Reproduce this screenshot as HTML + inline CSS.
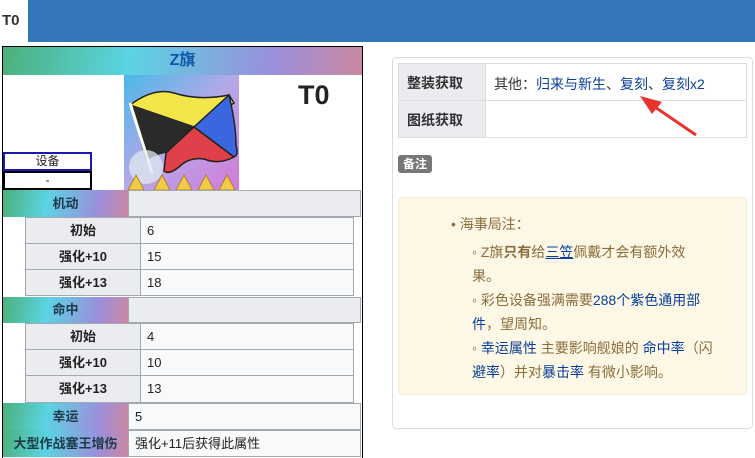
<!DOCTYPE html>
<html><head><meta charset="utf-8"><style>
*{margin:0;padding:0;box-sizing:border-box}
body{width:755px;height:455px;overflow:hidden;background:#fff;font-family:"Liberation Sans","Noto Sans CJK SC",sans-serif;font-size:13px;color:#222;position:relative}
.a{position:absolute}
.g{background:linear-gradient(100deg,#4bb07a 0%,#5bd4e2 35%,#9a8fdc 75%,#cc88a0 100%)}
.lab{position:absolute;background:#eaecf0;border:1px solid #a2a9b1;font-weight:bold;text-align:center;color:#222}
.val{position:absolute;background:#f8f9fa;border:1px solid #a2a9b1;padding-left:6px;color:#222}
.hd{position:absolute;font-weight:bold;text-align:center;color:#1c3a48}
a{color:#0b3e9c;text-decoration:none}
.y{color:#8a6d3b}
</style></head><body>
<div class="a" style="left:0;top:0;width:28px;height:42px;font-weight:bold;font-size:15px;line-height:42px;padding-left:2px;color:#333">T0</div>
<div class="a" style="left:28px;top:0;width:727px;height:42px;background:#3377b8"></div>

<div class="a" style="left:2px;top:46px;width:361px;height:412px;border:1px solid #000;border-bottom:none"></div>
<div class="a g" style="left:3px;top:47px;width:359px;height:28px;text-align:center;line-height:28px;font-weight:bold;font-size:16px;color:#0d56a8">Z旗</div>
<svg class="a" style="left:124px;top:75px" width="115" height="115" viewBox="0 0 115 115">
<defs><linearGradient id="bg" x1="0" y1="0" x2="1" y2="1"><stop offset="0" stop-color="#4ab8e8"/><stop offset=".5" stop-color="#b6a8e8"/><stop offset="1" stop-color="#d27ad8"/></linearGradient></defs>
<rect width="115" height="115" fill="url(#bg)"/>
<path d="M6,30 Q30,12 50,18 Q75,26 105,20 L110,28 L70,52 Z" fill="#f2e64a" stroke="#222" stroke-width="1.5"/>
<path d="M6,30 L70,52 L42,78 Q30,80 22,86 Z" fill="#2a2a2a"/>
<path d="M105,20 Q112,50 112,70 Q115,80 110,82 L70,52 Z" fill="#3a66e0" stroke="#222" stroke-width="1.5"/>
<path d="M70,52 L110,82 Q95,90 80,84 Q65,82 55,92 Q45,100 40,96 L42,78 Z" fill="#e0404a" stroke="#222" stroke-width="1.5"/>
<line x1="6" y1="28" x2="28" y2="98" stroke="#fff" stroke-width="3"/>
<circle cx="22" cy="92" r="17" fill="#dfe9f0" opacity=".75"/>
<g fill="#f3c94a" stroke="#a67b1a" stroke-width=".8">
<path d="M4,115 L12,100 L20,115Z"/><path d="M30,115 L38,100 L46,115Z"/><path d="M52,115 L60,100 L68,115Z"/><path d="M74,115 L82,100 L90,115Z"/><path d="M95,115 L103,100 L111,115Z"/></g>
</svg>
<div class="a" style="left:298px;top:80px;font-size:27px;font-weight:bold;color:#222">T0</div>
<div class="a" style="left:3px;top:152px;width:89px;height:19px;border:2px solid #1a1ab0;text-align:center;font-size:12px;line-height:15px">设备</div>
<div class="a" style="left:3px;top:171px;width:89px;height:19px;border:2px solid #000;text-align:center;font-size:12px;line-height:15px">-</div>

<div class="a g hd" style="left:3px;top:190px;width:125px;height:27px;line-height:27px">机动</div>
<div class="a" style="left:128px;top:190px;width:233px;height:27px;background:#eaecf0;border:1px solid #a2a9b1"></div>
<div class="lab" style="left:25px;top:217px;width:116px;height:27px;line-height:25px">初始</div><div class="val" style="left:140px;top:217px;width:214px;height:27px;line-height:25px">6</div>
<div class="lab" style="left:25px;top:243px;width:116px;height:27px;line-height:25px">强化+10</div><div class="val" style="left:140px;top:243px;width:214px;height:27px;line-height:25px">15</div>
<div class="lab" style="left:25px;top:269px;width:116px;height:27px;line-height:25px">强化+13</div><div class="val" style="left:140px;top:269px;width:214px;height:27px;line-height:25px">18</div>
<div class="a g hd" style="left:3px;top:297px;width:125px;height:26px;line-height:26px">命中</div>
<div class="a" style="left:128px;top:297px;width:233px;height:26px;background:#eaecf0;border:1px solid #a2a9b1"></div>
<div class="lab" style="left:25px;top:323px;width:116px;height:27px;line-height:25px">初始</div><div class="val" style="left:140px;top:323px;width:214px;height:27px;line-height:25px">4</div>
<div class="lab" style="left:25px;top:349px;width:116px;height:27px;line-height:25px">强化+10</div><div class="val" style="left:140px;top:349px;width:214px;height:27px;line-height:25px">10</div>
<div class="lab" style="left:25px;top:375px;width:116px;height:28px;line-height:26px">强化+13</div><div class="val" style="left:140px;top:375px;width:214px;height:28px;line-height:26px">13</div>
<div class="a g hd" style="left:3px;top:403px;width:125px;height:27px;line-height:27px">幸运</div>
<div class="val" style="left:128px;top:403px;width:233px;height:27px;line-height:25px">5</div>
<div class="a g hd" style="left:3px;top:430px;width:125px;height:27px;line-height:27px;font-size:13px">大型作战塞王增伤</div>
<div class="val" style="left:128px;top:430px;width:233px;height:27px;line-height:25px">强化+11后获得此属性</div>

<div class="a" style="left:392px;top:57px;width:361px;height:372px;border:1px solid #ddd;border-radius:4px"></div>
<div class="a" style="left:398px;top:63px;width:349px;height:75px;border:1px solid #ddd"></div>
<div class="a" style="left:399px;top:64px;width:87px;height:73px;background:#eaecf0;border-right:1px solid #ddd"></div>
<div class="a" style="left:399px;top:100px;width:347px;height:1px;background:#ddd"></div>
<div class="a" style="left:407px;top:73px;font-weight:bold;font-size:14px;color:#333">整装获取</div>
<div class="a" style="left:407px;top:110px;font-weight:bold;font-size:14px;color:#333">图纸获取</div>
<div class="a" style="left:494px;top:74px;font-size:14px;color:#333">其他：<a>归来与新生</a>、<a>复刻</a>、<a>复刻x2</a></div>
<svg class="a" style="left:630px;top:90px" width="80" height="50"><line x1="66" y1="45" x2="22" y2="15" stroke="#e8322e" stroke-width="3"/><polygon points="10,6 32,12 22,24" fill="#e8322e"/></svg>
<div class="a" style="left:398px;top:155px;width:34px;height:18px;background:#777;border-radius:3px;color:#fff;font-weight:bold;font-size:12px;text-align:center;line-height:18px">备注</div>
<div class="a" style="left:398px;top:197px;width:349px;height:198px;background:#fcf8e5;border:1px solid #faebcc;border-radius:4px"></div>
<div class="a y" style="left:451px;top:214px;font-size:14px">• 海事局注：</div>
<div class="a y" style="left:472px;top:240px;width:270px;font-size:14px;line-height:24px;white-space:nowrap">◦ Z旗<b>只有</b>给<a style="text-decoration:underline">三笠</a>佩戴才会有额外效<br>果。<br>◦ 彩色设备强满需要<a>288个紫色通用部</a><br><a>件</a>，望周知。<br>◦ <a>幸运属性</a> 主要影响舰娘的 <a>命中率</a>（闪<br><a>避率</a>）并对<a>暴击率</a> 有微小影响。</div>
</body></html>
